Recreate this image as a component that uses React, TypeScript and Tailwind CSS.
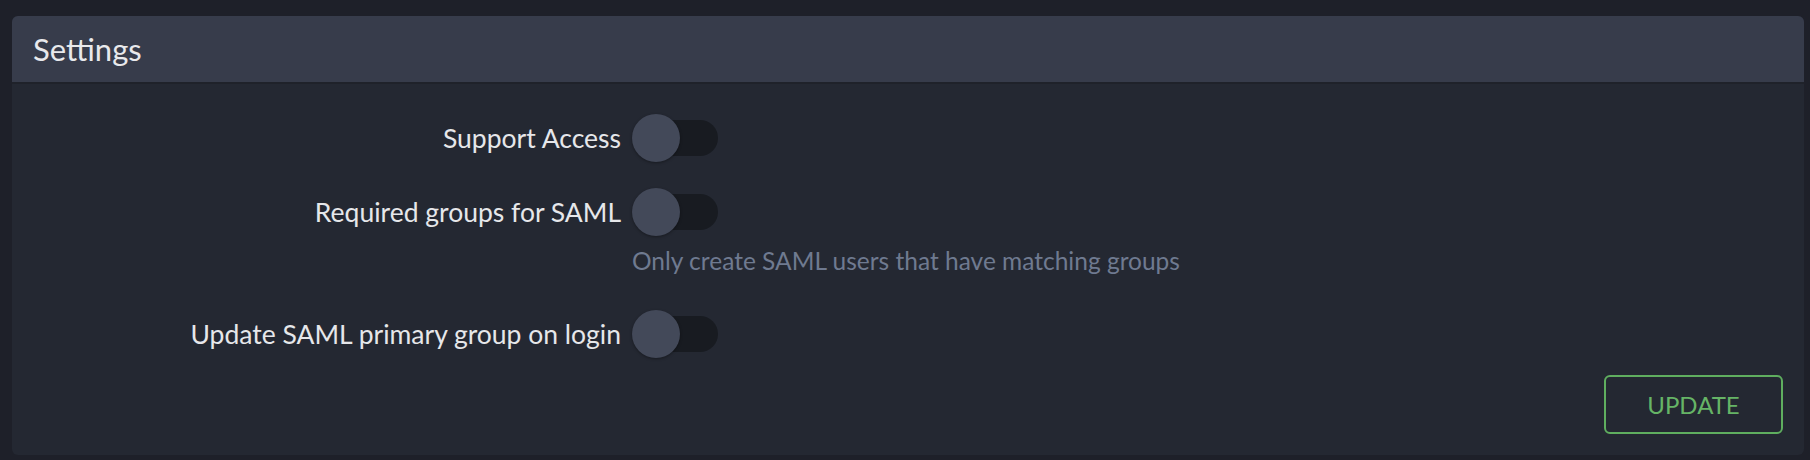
type ToggleRowProps = {
  label: string,
  help?: string,
}

function Toggle () {
  return (
    <div className="relative w-[86px] h-[48px] shrink-0">
      <div className="absolute left-[6px] right-0 top-[6px] h-[36px] rounded-full bg-[#181b21]" />
      <div className="absolute left-0 top-0 w-[48px] h-[48px] rounded-full bg-[#434959] shadow-[0_1px_3px_rgba(0,0,0,0.35)]" />
    </div>
  );
}

function ToggleRow ({label, help}: ToggleRowProps) {
  return (
    <div className="flex flex-col">
      <div className="flex items-center">
        <div className="w-[620px] pr-[11px] text-right text-[26.5px] text-[#e6e7ea] leading-none">{label}</div>
        <Toggle />
      </div>
      {help?<div className="ml-[620px] mt-[10px] mb-[8px] text-[24.5px] leading-[30px] text-[#6f7a90]">{help}</div>:''}
    </div>
  );
}

export default function App () {
  return (
    <div className="w-[1810px] h-[460px] bg-[#1e2029] pt-[16px] pl-[12px] pr-[6px] pb-[5px]" style={{fontFamily: 'Lato, "Noto Sans", sans-serif'}}>
      <div className="h-full rounded-md overflow-hidden bg-[#242832] flex flex-col">
        <div className="h-[68px] shrink-0 bg-[#373c4b] border-b-2 border-[#1f222a] flex items-center px-[21px]">
          <span className="text-[31px] text-[#e8e9ec]">Settings</span>
        </div>
        <div className="flex-1 flex flex-col pt-[30px] pb-[21px] pr-[21px]">
          <div className="flex flex-col gap-[26px]">
            <ToggleRow label="Support Access" />
            <ToggleRow label="Required groups for SAML" help="Only create SAML users that have matching groups" />
            <ToggleRow label="Update SAML primary group on login" />
          </div>
          <div className="flex-1 flex items-end justify-end">
            <button className="w-[179px] h-[59px] rounded-md border-2 border-[#5fae5f] text-[#66b466] text-[24px] uppercase">Update</button>
          </div>
        </div>
      </div>
    </div>
  );
}
